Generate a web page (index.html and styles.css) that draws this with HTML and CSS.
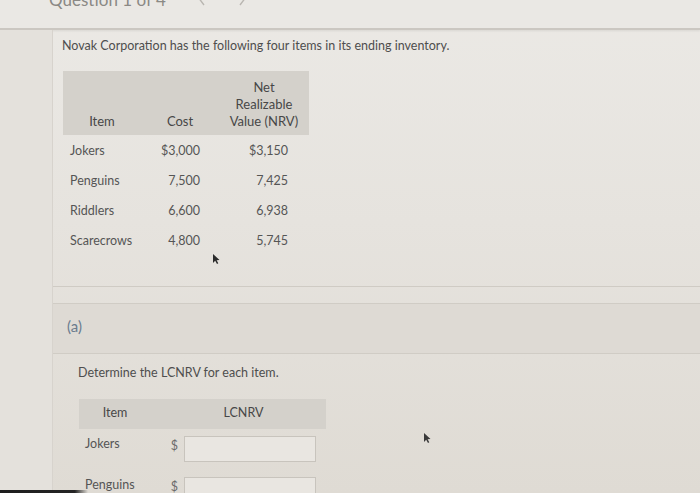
FILE: index.html
```html
<!DOCTYPE html>
<html>
<head>
<meta charset="utf-8">
<link rel="stylesheet" href="styles.css">
</head>
<body>
<div class="page">
  <header class="topbar">
    <div class="qtitle">Question 1 of 4</div>
    <svg class="chev chev-prev" width="8" height="14" viewBox="0 0 8 14"><path d="M6 1 L1.5 7 L6 13" fill="none" stroke="#b9b6b1" stroke-width="1.4"/></svg>
    <svg class="chev chev-next" width="8" height="14" viewBox="0 0 8 14"><path d="M2 1 L6.5 7 L2 13" fill="none" stroke="#b9b6b1" stroke-width="1.4"/></svg>
  </header>
  <div class="main">
    <aside class="side"></aside>
    <div class="content">
      <section class="card">
        <p class="intro">Novak Corporation has the following four items in its ending inventory.</p>
        <table class="inv">
          <thead>
            <tr>
              <th class="c-item">Item</th>
              <th class="c-cost">Cost</th>
              <th class="c-nrv">Net<br>Realizable<br>Value (NRV)</th>
            </tr>
          </thead>
          <tbody>
            <tr><td class="c-item">Jokers</td><td class="c-cost">$3,000</td><td class="c-nrv">$3,150</td></tr>
            <tr><td class="c-item">Penguins</td><td class="c-cost">7,500</td><td class="c-nrv">7,425</td></tr>
            <tr><td class="c-item">Riddlers</td><td class="c-cost">6,600</td><td class="c-nrv">6,938</td></tr>
            <tr><td class="c-item">Scarecrows</td><td class="c-cost">4,800</td><td class="c-nrv">5,745</td></tr>
          </tbody>
        </table>
      </section>
      <div class="part-band"><span class="part-label">(a)</span></div>
      <section class="part">
        <p class="instr">Determine the LCNRV for each item.</p>
        <table class="ans">
          <thead>
            <tr>
              <th class="a-item">Item</th>
              <th class="a-val" colspan="2">LCNRV</th>
            </tr>
          </thead>
          <tbody>
            <tr><td class="a-item">Jokers</td><td class="a-cur">$</td><td class="a-in"><input class="box" type="text"></td></tr>
            <tr><td class="a-item">Penguins</td><td class="a-cur">$</td><td class="a-in"><input class="box" type="text"></td></tr>
          </tbody>
        </table>
      </section>
    </div>
  </div>
  <svg class="cursor cursor-1" width="8" height="12" viewBox="0 0 8 12"><path d="M1 1 L1 10 L3.2 7.8 L5 11 L6.3 10.3 L4.6 7.2 L7.5 7 Z" fill="#2b2b2b"/></svg>
  <svg class="cursor cursor-2" width="8" height="12" viewBox="0 0 8 12"><path d="M1 1 L1 10 L3.2 7.8 L5 11 L6.3 10.3 L4.6 7.2 L7.5 7 Z" fill="#3a3a3a"/></svg>
  <div class="bezel"></div>
</div>
</body>
</html>
```

FILE: styles.css
```css
html, body {
  margin: 0;
  padding: 0;
}
body {
  font-family: Lato, "Open Sans", sans-serif;
  color: #505050;
  background: #e6e3de;
}
.page {
  position: relative;
  width: 700px;
  height: 493px;
  overflow: hidden;
  background: linear-gradient(to bottom, #ebe9e5 0%, #e6e3de 45%, #dfdbd4 100%);
}
.topbar {
  height: 28px;
  display: flex;
  align-items: flex-start;
  padding-left: 49px;
  background: #eae8e4;
  border-bottom: 2px solid #cbc7c1;
  box-shadow: 0 1px 2px rgba(0,0,0,0.08);
}
.qtitle {
  font-size: 17px;
  line-height: 20px;
  margin-top: -10px;
  color: #8b8985;
}
.chev {
  margin-top: -8px;
}
.chev-prev {
  margin-left: 32px;
}
.chev-next {
  margin-left: 32px;
}
.main {
  display: flex;
  height: 463px;
}
.side {
  width: 52px;
  flex: none;
  background: #e4e1dc;
  border-right: 1px solid #d7d3cd;
}
.content {
  flex: 1;
}
.card {
  padding: 8px 0 31px 9px;
  border-bottom: 1px solid #cfcbc4;
}
.intro {
  margin: 0;
  font-size: 12.5px;
  line-height: 16px;
  color: #4e4e4e;
}
.inv {
  margin-top: 17px;
  margin-left: 1px;
  border-collapse: collapse;
  font-size: 12.5px;
}
.inv th {
  background: #d4d1cb;
  font-weight: normal;
  font-size: 13px;
  line-height: 17px;
  color: #474747;
  vertical-align: bottom;
  padding: 0 0 5px 0;
  height: 59px;
}
.inv td {
  height: 30px;
  padding: 0;
  color: #555;
}
.inv .c-item { width: 78px; }
.inv .c-cost { width: 78px; }
.inv .c-nrv { width: 90px; }
.inv td.c-item { padding-left: 7px; width: 71px; }
.inv td.c-cost { text-align: right; padding-right: 19px; width: 59px; }
.inv td.c-nrv { text-align: right; padding-right: 21px; width: 69px; }
.part-band {
  margin-top: 16px;
  display: flex;
  align-items: center;
  padding: 0 0 6px 14px;
  box-sizing: border-box;
  height: 51px;
  background: #dedad4;
  border-top: 1px solid #d0ccc5;
  border-bottom: 1px solid #d0ccc5;
}
.part-label {
  font-size: 15px;
  color: #6b7c8e;
}
.part {
  padding: 11px 0 0 25px;
}
.instr {
  margin: 0;
  font-size: 12.5px;
  line-height: 16px;
  color: #4e4e4e;
}
.ans {
  margin-top: 18px;
  margin-left: 1px;
  border-collapse: collapse;
  font-size: 12.5px;
}
.ans th {
  background: #d4d1cb;
  font-weight: normal;
  font-size: 12.5px;
  color: #474747;
  height: 26px;
  padding: 0 0 4px 0;
}
.ans th.a-item { width: 72px; }
.ans th.a-val { padding-left: 10px; }
.ans td {
  vertical-align: top;
  padding: 7px 0 0 0;
  height: 34px;
  line-height: 16px;
  color: #555;
}
.ans td.a-item { padding-left: 6px; }
.ans td.a-cur { width: 27px; height: 32px; text-align: right; padding-right: 6px; padding-top: 9px; color: #6a6a6a; }
.ans td.a-in { width: 142px; }
.box {
  display: block;
  box-sizing: border-box;
  width: 132px;
  height: 26px;
  margin: 0;
  padding: 0;
  border: 1px solid #c8c4bd;
  background: #e9e6e1;
  outline: none;
}
.cursor {
  position: absolute;
}
.cursor-1 { left: 212px; top: 253px; }
.cursor-2 { left: 423px; top: 432px; }
.bezel {
  position: absolute;
  left: 0;
  bottom: 0;
  width: 88px;
  height: 3px;
  background: linear-gradient(to right, #1d1d1d 0%, #242424 85%, rgba(40,40,40,0) 100%);
}
```
